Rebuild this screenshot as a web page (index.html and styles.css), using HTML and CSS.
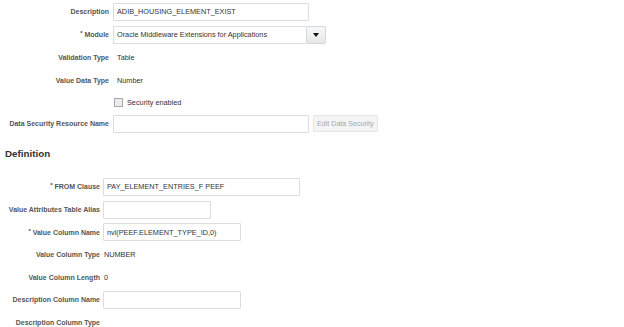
FILE: index.html
```html
<!DOCTYPE html>
<html>
<head>
<meta charset="utf-8">
<link rel="stylesheet" href="styles.css">
</head>
<body>
<div class="page">
  <div class="form form-top">
    <div class="row"><label class="lbl">Description</label><div class="field"><span class="input w196">ADIB_HOUSING_ELEMENT_EXIST</span></div></div>
    <div class="row"><label class="lbl"><sup class="req">*</sup> Module</label><div class="field"><span class="select"><span class="select-text">Oracle Middleware Extensions for Applications</span><span class="select-btn"><svg width="6" height="4" viewBox="0 0 6 4"><path d="M0 0H6L3 4Z" fill="#111"/></svg></span></span></div></div>
    <div class="row"><label class="lbl">Validation Type</label><div class="field"><span class="val">Table</span></div></div>
    <div class="row"><label class="lbl">Value Data Type</label><div class="field"><span class="val">Number</span></div></div>
    <div class="row row-check"><label class="lbl"></label><div class="field"><span class="check"></span><span class="check-text">Security enabled</span></div></div>
    <div class="row row-ds"><label class="lbl">Data Security Resource Name</label><div class="field"><span class="input w196"></span><span class="btn">Edit Data Security</span></div></div>
  </div>
  <h2 class="heading">Definition</h2>
  <div class="form form-def">
    <div class="row"><label class="lbl"><sup class="req">*</sup> FROM Clause</label><div class="field"><span class="input w197">PAY_ELEMENT_ENTRIES_F PEEF</span></div></div>
    <div class="row"><label class="lbl">Value Attributes Table Alias</label><div class="field"><span class="input w108"></span></div></div>
    <div class="row"><label class="lbl"><sup class="req">*</sup> Value Column Name</label><div class="field"><span class="input w138">nvl(PEEF.ELEMENT_TYPE_ID,0)</span></div></div>
    <div class="row"><label class="lbl">Value Column Type</label><div class="field"><span class="val">NUMBER</span></div></div>
    <div class="row"><label class="lbl">Value Column Length</label><div class="field"><span class="val">0</span></div></div>
    <div class="row"><label class="lbl">Description Column Name</label><div class="field"><span class="input w138"></span></div></div>
    <div class="row"><label class="lbl">Description Column Type</label><div class="field"><span class="val"></span></div></div>
  </div>
</div>
</body>
</html>
```
FILE: styles.css
```css
html, body {
  margin: 0;
  padding: 0;
  background: #ffffff;
}
body {
  font-family: "Liberation Sans", Arial, sans-serif;
  color: #333333;
  width: 624px;
  height: 327px;
  overflow: hidden;
}
.page {
  display: flex;
  flex-direction: column;
}
.form {
  display: flex;
  flex-direction: column;
}
.row {
  display: grid;
  grid-template-columns: 109px 1fr;
  column-gap: 4px;
  align-items: center;
  height: 23px;
}
.form-top .row-check {
  height: 20px;
}
.form-def .row {
  grid-template-columns: 100px 1fr;
  column-gap: 3px;
  height: 22.6px;
}
.lbl {
  text-align: right;
  font-size: 7px;
  font-weight: bold;
  color: #555555;
  white-space: nowrap;
}
.req {
  font-size: 6px;
  vertical-align: 2px;
  line-height: 0;
  color: #444;
}
.field {
  display: flex;
  align-items: center;
  font-size: 7.3px;
  color: #333333;
  white-space: nowrap;
}
.input {
  box-sizing: border-box;
  height: 18px;
  border: 1px solid #dadee3;
  border-radius: 1px;
  background: #ffffff;
  padding: 0 3px;
  display: flex;
  align-items: center;
  color: #333;
}
.w196 { width: 196px; }
.w197 { width: 197px; }
.w108 { width: 108px; }
.w138 { width: 138px; }
.val {
  padding-left: 4px;
}
.form-def .val {
  padding-left: 1px;
}
.select {
  display: flex;
  height: 18px;
}
.select-text {
  box-sizing: border-box;
  width: 193px;
  height: 18px;
  border: 1px solid #dadee3;
  border-right: none;
  padding: 0 3px;
  display: flex;
  align-items: center;
}
.select-btn {
  box-sizing: border-box;
  width: 20px;
  height: 18px;
  border: 1px solid #d3d6da;
  border-radius: 2px;
  background: linear-gradient(#f9f9f9, #e6e7e8);
  display: flex;
  align-items: center;
  justify-content: center;
}
.check {
  box-sizing: border-box;
  width: 9px;
  height: 9px;
  margin-left: 1px;
  border: 1px solid #a8a8a8;
  background: #ececec;
}
.check-text {
  margin-left: 4px;
}
.btn {
  box-sizing: border-box;
  margin-left: 4px;
  height: 17px;
  width: 65px;
  border: 1px solid #e2e4e6;
  border-radius: 2px;
  background: #f4f4f4;
  color: #a3aab0;
  display: flex;
  align-items: center;
  justify-content: center;
  font-size: 7.1px;
}
.heading {
  margin: 3px 0 7.7px 0;
  padding-left: 5px;
  height: 30px;
  display: flex;
  align-items: center;
  font-size: 9.8px;
  font-weight: bold;
  color: #333333;
}
```
